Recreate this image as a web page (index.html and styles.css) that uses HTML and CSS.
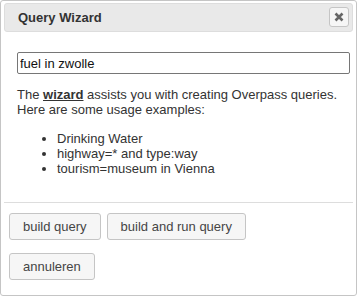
FILE: index.html
```html
<!DOCTYPE html>
<html>
<head>
<meta charset="utf-8">
<link rel="stylesheet" href="styles.css">
</head>
<body>
<div class="dialog">
  <div class="titlebar">
    <span class="title">Query Wizard</span>
    <button class="close" aria-label="close">
      <svg width="10" height="10" viewBox="0 0 10 10"><path d="M1.5 1.5 L8.5 8.5 M8.5 1.5 L1.5 8.5" stroke="#666" stroke-width="2.6" stroke-linecap="butt"/></svg>
    </button>
  </div>
  <div class="content">
    <input class="search" type="text" value="fuel in zwolle">
    <p class="intro">The <a class="wizard">wizard</a> assists you with creating Overpass queries. Here are some usage examples:</p>
    <ul class="examples">
      <li>Drinking Water</li>
      <li>highway=* and type:way</li>
      <li>tourism=museum in Vienna</li>
    </ul>
  </div>
  <div class="buttonpane">
    <div class="row">
      <button class="btn">build query</button>
      <button class="btn">build and run query</button>
    </div>
    <div class="row">
      <button class="btn">annuleren</button>
    </div>
  </div>
</div>
</body>
</html>
```

FILE: styles.css
```css
html, body {
  margin: 0;
  padding: 0;
  background: #fff;
}
.dialog {
  box-sizing: border-box;
  width: 357px;
  height: 296px;
  border: 1px solid #c5c5c5;
  border-radius: 3px;
  padding: 2px 3px 3px 3px;
  font-family: "Liberation Sans", Arial, sans-serif;
  font-size: 13px;
  color: #333;
  background: #fff;
}
.titlebar {
  position: relative;
  height: 29px;
  box-sizing: border-box;
  border: 1px solid #dddddd;
  background: #e9e9e9;
  border-radius: 3px;
  padding: 6px 13px;
  line-height: 15px;
}
.title {
  font-weight: bold;
  color: #333;
}
.close {
  position: absolute;
  right: 3px;
  top: 3px;
  width: 20px;
  height: 20px;
  box-sizing: border-box;
  border: 1px solid #c5c5c5;
  background: #f6f6f6;
  border-radius: 3px;
  padding: 0;
  display: flex;
  align-items: center;
  justify-content: center;
}
.content {
  padding: 20px 13px 13px 13px;
}
.search {
  display: block;
  box-sizing: border-box;
  width: 333px;
  height: 22px;
  margin: 0;
  border: 1px solid #767676;
  border-radius: 2px;
  padding: 1px 2px;
  font-family: "Liberation Sans", Arial, sans-serif;
  font-size: 13px;
  color: #111;
}
.intro {
  margin: 13px 0 0 0;
  line-height: 15px;
}
.wizard {
  font-weight: bold;
  text-decoration: underline;
  color: #333;
}
.examples {
  margin: 14px 0 0 0;
  padding-left: 40px;
  line-height: 15px;
}
.buttonpane {
  margin-top: 13px;
  border-top: 1px solid #dddddd;
  padding: 10px 0 0 5px;
  display: flex;
  flex-direction: column;
  gap: 13px;
}
.row {
  display: flex;
  gap: 6px;
}
.btn {
  box-sizing: border-box;
  height: 27px;
  border: 1px solid #c5c5c5;
  background: #f6f6f6;
  border-radius: 3px;
  padding: 5px 13px;
  font-family: "Liberation Sans", Arial, sans-serif;
  font-size: 13px;
  line-height: 15px;
  color: #454545;
  margin: 0;
}
```
